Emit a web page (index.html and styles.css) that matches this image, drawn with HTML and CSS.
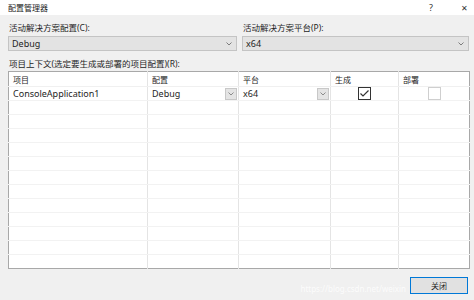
FILE: index.html
```html
<!DOCTYPE html>
<html lang="zh-CN">
<head>
    <meta charset="UTF-8">
    <title>配置管理器</title>
    <link rel="stylesheet" href="styles.css">
</head>
<body>
    <div class="dialog">
        <!-- Title bar -->
        <div class="titlebar">
            <span class="title">配置管理器</span>
            <span class="help">?</span>
            <span class="close">✕</span>
        </div>

        <div class="content">
            <!-- Solution config / platform -->
            <div class="solution-row">
                <div class="field">
                    <label>活动解决方案配置(C):</label>
                    <div class="combo">
                        <span>Debug</span>
                        <svg class="chev" width="6" height="4" viewBox="0 0 6 4"><path d="M0.5 0.5 L3 3 L5.5 0.5" fill="none" stroke="#707070" stroke-width="0.9"/></svg>
                    </div>
                </div>
                <div class="field">
                    <label>活动解决方案平台(P):</label>
                    <div class="combo">
                        <span>x64</span>
                        <svg class="chev" width="6" height="4" viewBox="0 0 6 4"><path d="M0.5 0.5 L3 3 L5.5 0.5" fill="none" stroke="#707070" stroke-width="0.9"/></svg>
                    </div>
                </div>
            </div>

            <label class="context-label">项目上下文(选定要生成或部署的项目配置)(R):</label>

            <table class="projects">
                <colgroup>
                    <col class="c-project">
                    <col class="c-config">
                    <col class="c-platform">
                    <col class="c-build">
                    <col class="c-deploy">
                </colgroup>
                <thead>
                    <tr>
                        <th>项目</th>
                        <th>配置</th>
                        <th>平台</th>
                        <th>生成</th>
                        <th>部署</th>
                    </tr>
                </thead>
                <tbody>
                    <tr>
                        <td>ConsoleApplication1</td>
                        <td>
                            <div class="cell-combo">
                                <span>Debug</span>
                                <span class="drop-btn"><svg width="6" height="4" viewBox="0 0 6 4"><path d="M0.5 0.5 L3 3 L5.5 0.5" fill="none" stroke="#808080" stroke-width="0.9"/></svg></span>
                            </div>
                        </td>
                        <td>
                            <div class="cell-combo">
                                <span>x64</span>
                                <span class="drop-btn"><svg width="6" height="4" viewBox="0 0 6 4"><path d="M0.5 0.5 L3 3 L5.5 0.5" fill="none" stroke="#808080" stroke-width="0.9"/></svg></span>
                            </div>
                        </td>
                        <td class="check-cell">
                            <span class="checkbox checked"><svg width="11" height="9" viewBox="0 0 11 9"><path d="M1.5 4.5 L4 7 L9.5 1.5" fill="none" stroke="#333" stroke-width="1.2"/></svg></span>
                        </td>
                        <td class="check-cell"><span class="checkbox"></span></td>
                    </tr>
                    <tr><td></td><td></td><td></td><td></td><td></td></tr>
                    <tr><td></td><td></td><td></td><td></td><td></td></tr>
                    <tr><td></td><td></td><td></td><td></td><td></td></tr>
                    <tr><td></td><td></td><td></td><td></td><td></td></tr>
                    <tr><td></td><td></td><td></td><td></td><td></td></tr>
                    <tr><td></td><td></td><td></td><td></td><td></td></tr>
                    <tr><td></td><td></td><td></td><td></td><td></td></tr>
                    <tr><td></td><td></td><td></td><td></td><td></td></tr>
                    <tr><td></td><td></td><td></td><td></td><td></td></tr>
                    <tr><td></td><td></td><td></td><td></td><td></td></tr>
                    <tr><td></td><td></td><td></td><td></td><td></td></tr>
                    <tr class="last-row"><td></td><td></td><td></td><td></td><td></td></tr>
                </tbody>
            </table>

            <div class="footer">
                <span class="watermark">https://blog.csdn.net/weixin</span>
                <button class="btn-close">关闭</button>
            </div>
        </div>
    </div>
</body>
</html>
```

FILE: styles.css
```css
body {
    margin: 0;
    background-color: #f0f0f0;
    font-family: "Noto Sans", "Noto Sans CJK SC", sans-serif;
    font-size: 9px;
    color: #1e1e1e;
}

.dialog {
    width: 474px;
    height: 300px;
    overflow: hidden;
}

/* Title bar */
.titlebar {
    height: 15px;
    background-color: #ffffff;
    display: flex;
    align-items: center;
    padding-left: 8px;
}

.title {
    flex: 1;
    font-size: 8px;
    color: #222;
}

.help {
    width: 10px;
    margin-right: 22px;
    font-size: 9px;
    color: #333;
}

.close {
    width: 13px;
    font-size: 8px;
    color: #333;
}

.content {
    padding: 5px 5px 0 8px;
}

/* Solution config row */
.solution-row {
    display: grid;
    grid-template-columns: 229px 227px;
    column-gap: 5px;
}

.field label {
    display: block;
    height: 15px;
    line-height: 15px;
    font-size: 8.5px;
    padding-left: 1px;
}

.combo {
    height: 13px;
    margin-top: 1px;
    border: 1px solid #c4c4c4;
    background-color: #e3e3e3;
    display: flex;
    align-items: center;
    justify-content: space-between;
    padding: 0 4px 0 3px;
}

.chev {
    display: block;
}

.context-label {
    display: block;
    height: 14px;
    line-height: 14px;
    margin-top: 6px;
    font-size: 8.5px;
    padding-left: 1px;
}

/* Project table */
.projects {
    width: 461px;
    table-layout: fixed;
    border-collapse: collapse;
    background-color: #ffffff;
    border: 1px solid #a8a8a8;
}

.c-project { width: 139px; }
.c-config { width: 91px; }
.c-platform { width: 92px; }
.c-build { width: 68px; }
.c-deploy { width: 71px; }

.projects thead tr {
    height: 15px;
}

.projects tbody tr {
    height: 14px;
}

.projects th {
    padding: 0 0 0 4px;
    line-height: 11px;
    text-align: left;
    font-weight: normal;
    font-size: 8px;
    border-left: 1px solid #e4e4e4;
    border-bottom: 1px solid #f0f0f0;
}

.projects td {
    padding: 0 0 0 4px;
    line-height: 11px;
    border-left: 1px solid #e4e4e4;
    border-bottom: 1px solid #f2f2f2;
}

.projects th:first-child, .projects td:first-child {
    border-left: none;
}

.projects .last-row td {
    border-bottom: none;
}

.cell-combo {
    display: flex;
    align-items: center;
    justify-content: space-between;
    height: 13px;
    padding-right: 1px;
}

.drop-btn {
    width: 10px;
    height: 10px;
    border: 1px solid #c8c8c8;
    background-color: #e4e4e4;
    display: flex;
    align-items: center;
    justify-content: center;
}

.check-cell {
    text-align: center;
}

.projects td.check-cell {
    padding: 0;
}

.checkbox {
    display: inline-flex;
    align-items: center;
    justify-content: center;
    width: 11px;
    height: 11px;
    border: 1px solid #cfcfcf;
    background-color: #ffffff;
    vertical-align: middle;
}

.checkbox.checked {
    border-color: #333333;
}

/* Footer */
.footer {
    display: flex;
    justify-content: flex-end;
    align-items: center;
    gap: 4px;
    margin-top: 8px;
    padding-right: 1px;
}

.watermark {
    margin-top: 6px;
    font-size: 8px;
    color: #ffffff;
    opacity: 0.8;
}

.btn-close {
    width: 58px;
    height: 17px;
    padding: 0;
    font-family: "Noto Sans CJK SC", sans-serif;
    font-size: 8px;
    color: #1e1e1e;
    background-color: #e1e1e1;
    border: 1px solid #0078d7;
}
```
